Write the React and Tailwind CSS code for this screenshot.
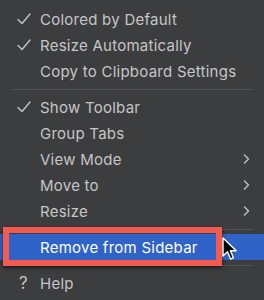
import React from "react";

const Check = () => (
  <svg width="14" height="12" viewBox="0 0 14 12" fill="none" className="block">
    <path d="M1 6.5 L5 10.5 L13 1" stroke="#c4c4c4" strokeWidth="1.4" strokeLinecap="round" strokeLinejoin="round" />
  </svg>
);

const Chevron = () => (
  <svg width="7" height="10" viewBox="0 0 7 10" fill="none" className="block">
    <path d="M1.5 1 L5.5 5 L1.5 9" stroke="#bdbdbd" strokeWidth="1.5" strokeLinecap="round" strokeLinejoin="round" />
  </svg>
);

const Sep = () => (
  <div className="h-[10px] flex items-center pl-[12px] pr-[11px]">
    <div className="h-px w-full bg-[#535456]" />
  </div>
);

function Row({ label, check, sub, lead }) {
  return (
    <div className="h-[26px] flex items-center text-[#c6c6c6]">
      <div className="w-[40px] flex items-center justify-end pr-[9px]">
        {check && <Check />}
        {lead}
      </div>
      <span className="flex-1">{label}</span>
      {sub && (
        <div className="pr-[14px]">
          <Chevron />
        </div>
      )}
    </div>
  );
}

export default function App() {
  return (
    <div
      className="relative w-[264px] h-[300px] bg-[#3c3d3f] pt-[6px] overflow-hidden text-[15px] leading-none tracking-[0.25px]"
      style={{ fontFamily: "Inter, 'Liberation Sans', sans-serif" }}
    >
      <Row label="Colored by Default" check />
      <Row label="Resize Automatically" check />
      <Row label="Copy to Clipboard Settings" />
      <Sep />
      <Row label="Show Toolbar" check />
      <Row label="Group Tabs" />
      <Row label="View Mode" sub />
      <Row label="Move to" sub />
      <Row label="Resize" sub />
      <Sep />
      <div className="h-[26px] flex items-center bg-[#2f63c8] text-white">
        <span className="pl-[40px]">Remove from Sidebar</span>
      </div>
      <Sep />
      <Row label="Help" lead={<span className="text-[17px] text-[#c6c6c6] pr-[3px]">?</span>} />

      {/* annotation box */}
      <div className="absolute left-[3px] top-[227px] w-[219px] h-[39px] border-[6px] border-[#f35b50] shadow-[0_2px_4px_rgba(0,0,0,0.6)]" />

      {/* mouse pointer */}
      <svg className="absolute left-[222px] top-[237px]" width="16" height="25" viewBox="0 0 16 25">
        <path
          d="M1 1 L1 19 L5.5 14.8 L8.6 22 L11.4 20.8 L8.4 13.8 L14.2 13.8 Z"
          fill="#000"
          stroke="#fff"
          strokeWidth="1.4"
          strokeLinejoin="round"
        />
      </svg>
    </div>
  );
}
